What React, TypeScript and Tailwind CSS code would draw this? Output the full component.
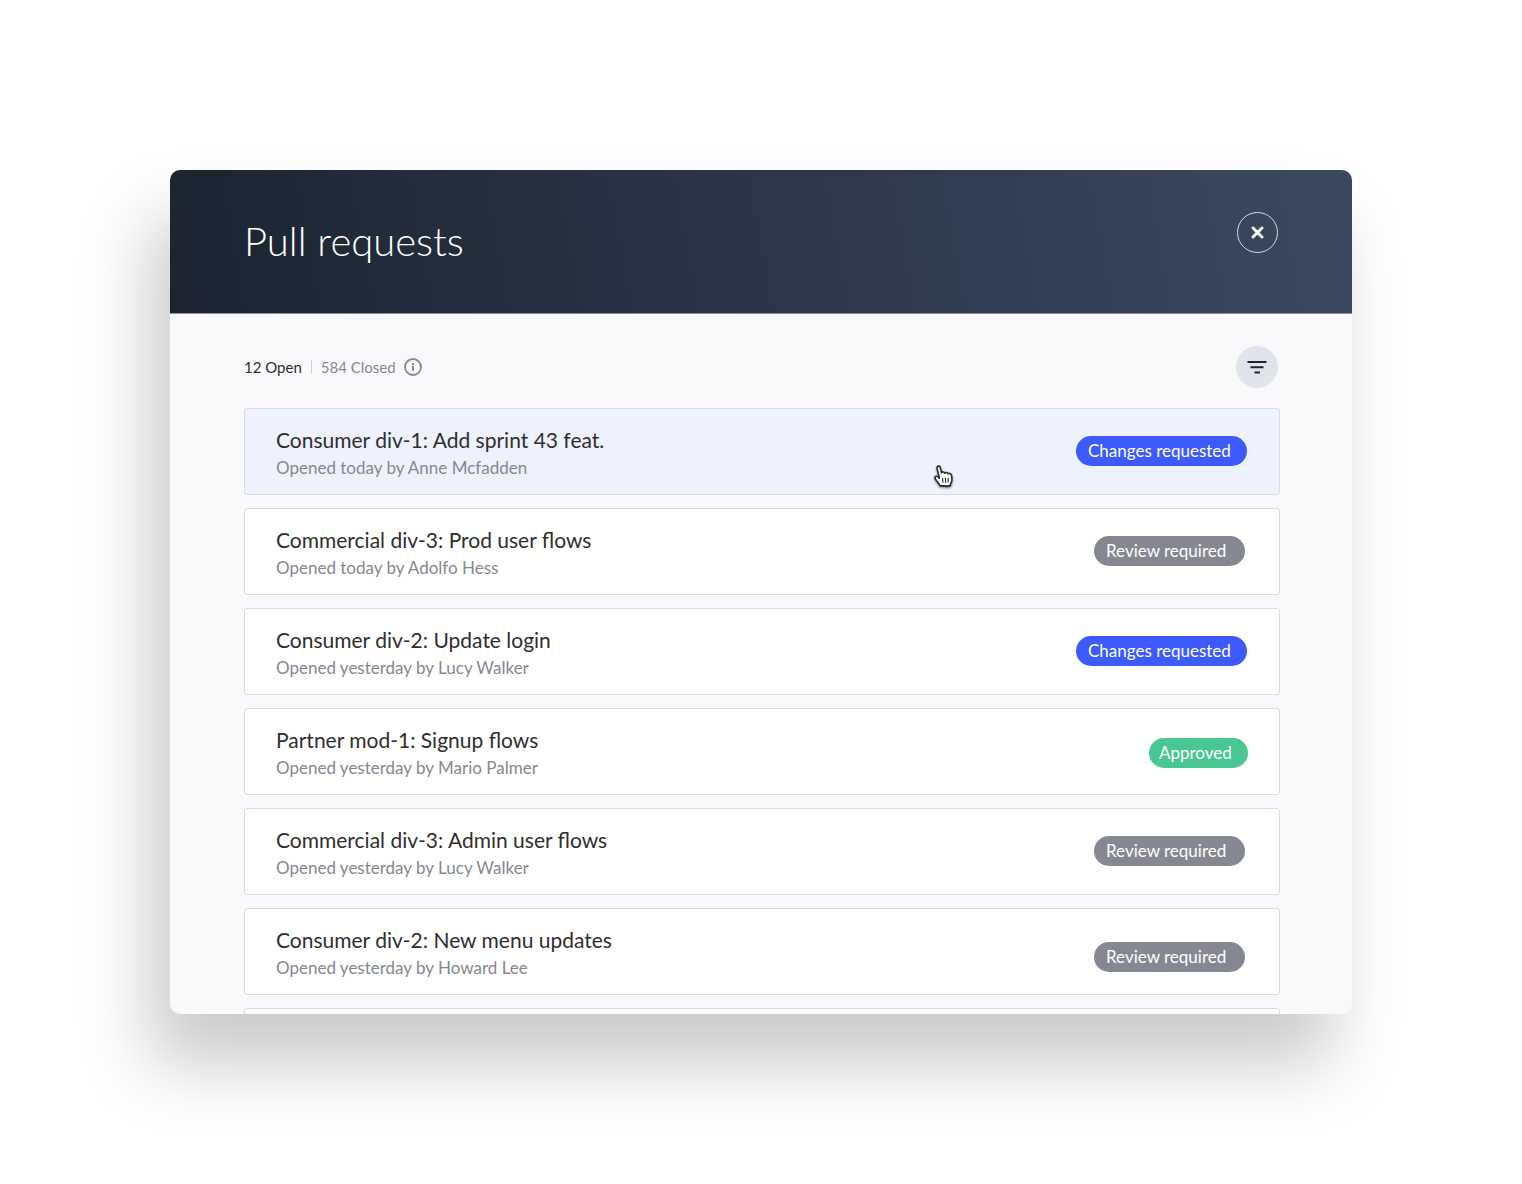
import React from "react";
import clsx from "clsx";

type Status = "changes" | "review" | "approved";

interface PullRequest {
  title: string;
  meta: string;
  status: Status;
  active?: boolean;
  badgeAtEnd?: boolean;
}

const pullRequests: PullRequest[] = [
  { title: "Consumer div-1: Add sprint 43 feat.", meta: "Opened today by Anne Mcfadden", status: "changes", active: true },
  { title: "Commercial div-3: Prod user flows", meta: "Opened today by Adolfo Hess", status: "review" },
  { title: "Consumer div-2: Update login", meta: "Opened yesterday by Lucy Walker", status: "changes" },
  { title: "Partner mod-1: Signup flows", meta: "Opened yesterday by Mario Palmer", status: "approved" },
  { title: "Commercial div-3: Admin user flows", meta: "Opened yesterday by Lucy Walker", status: "review" },
  { title: "Consumer div-2: New menu updates", meta: "Opened yesterday by Howard Lee", status: "review", badgeAtEnd: true },
];

const badges: Record<Status, { label: string; className: string }> = {
  changes: { label: "Changes requested", className: "mt-1 mr-8 w-[171px] px-3 bg-[#3d5afe]" },
  review: { label: "Review required", className: "mt-1 mr-[34px] w-[151px] px-3 bg-[#868891]" },
  approved: { label: "Approved", className: "mt-2 mr-[31px] w-[99px] px-2.5 bg-[#48c792]" },
};

const PointerCursor: React.FC = () => (
  <svg
    viewBox="1.5 0 17.5 21"
    className="pointer-events-none absolute top-14 left-2/3 h-6 w-5 drop-shadow-[0_1px_1px_rgba(0,0,0,0.5)]"
    aria-hidden="true"
  >
    <path
      d="M7 18.300c-.5-1.100-1.300-1.800-2.100-2.900-1-1.300-1.800-2.300-2.400-3.700-.5-1 .1-2 1.200-1.900.9.1 1.700.8 2.500 1.700L4.200 3C4 1.900 4.500 1.100 5.400 1c.9-.1 1.500.5 1.700 1.500l.9 4.300c.3-.7 1-.9 1.700-.7.6.1 1 .5 1.200 1 .5-.6 1.100-.7 1.800-.5.600.2 1 .6 1.100 1.200.5-.4 1-.5 1.600-.3.900.3 1.300 1 1.500 2 .3 1.600.4 2.900.1 4.500-.2 1.200-.9 1.900-1.200 3.100v1.200l-2-.1-1.200.6-1.100-.7z"
      fill="#fff"
      stroke="#2b2b2b"
      strokeWidth="1.400"
      strokeLinejoin="round"
    />
    <path d="M9 11.500l.3 4M11.500 11.300l.2 4.200M13.900 11.300v4" stroke="#2b2b2b" strokeWidth="1" fill="none" />
  </svg>
);

const PullRequestRow: React.FC<{ item: PullRequest }> = ({ item }) => {
  const badge = badges[item.status];

  return (
    <li
      className={clsx(
        "relative flex items-center justify-between rounded-[3px] border border-[#d8dae8] pt-[17px] pb-3 pl-[31px]",
        item.active ? "bg-[#eef2ff]" : "bg-white"
      )}
    >
      <div>
        <h2 className="text-[21px] leading-7 text-[#2e2e2e]">
          <a href="#">{item.title}</a>
        </h2>
        <p className="text-[17px] leading-7 text-[#868891]">{item.meta}</p>
      </div>
      <span
        className={clsx(
          "mb-2.5 h-[30px] rounded-full text-[17px] leading-[30px] whitespace-nowrap text-white",
          badge.className,
          item.badgeAtEnd && "self-end"
        )}
      >
        {badge.label}
      </span>
      {item.active && <PointerCursor />}
    </li>
  );
};

const App: React.FC = () => {
  return (
    <div className="flex h-screen bg-white p-[170px] font-['Lato','Open_Sans',sans-serif]">
      <main className="flex flex-1 flex-col overflow-hidden rounded-[10px] bg-[#f9f9fc] shadow-[-20px_50px_70px_rgba(0,0,0,0.21)]">
        <header className="flex shrink-0 items-start justify-between border-b border-[#8b8f9c] bg-linear-[80deg,#1b2430,#3b495f] px-[74px] pt-[42px] pb-[45px]">
          <h1 className="pt-[3px] text-[40px] leading-[53px] font-light text-white">Pull requests</h1>
          <button
            type="button"
            aria-label="Close"
            className="flex size-[41px] items-center justify-center rounded-full border border-[#d5d8e0]"
          >
            <svg viewBox="0 0 15 15" className="size-[15px]" stroke="#fff" strokeWidth="3" strokeLinecap="round">
              <path d="M3 3l9 9M12 3l-9 9" />
            </svg>
          </button>
        </header>

        <div className="flex shrink-0 items-center justify-between px-[74px] pt-8 pb-5">
          <div className="flex items-center text-[15px] leading-5">
            <a href="#" className="text-[#2e2e2e]">12 Open</a>
            <span className="mx-[9px] h-3.5 w-px bg-[#cfd0d6]" />
            <a href="#" className="text-[#868891]">584 Closed</a>
            <svg viewBox="0 0 18 18" className="ml-2 size-[18px]" fill="none" stroke="#868891">
              <circle cx="9" cy="9" r="8" strokeWidth="1.800" />
              <path d="M9 8v4.800M9 5.200v1.700" strokeWidth="2" />
            </svg>
          </div>
          <button
            type="button"
            aria-label="Filter"
            className="flex size-[42px] items-center justify-center rounded-full bg-[#e1e4eb]"
          >
            <svg viewBox="0 0 20 14" className="h-3.5 w-5" stroke="#1c2430" strokeWidth="2">
              <path d="M.500 2h19M3.500 7.300h13M7.500 12.500h5.500" />
            </svg>
          </button>
        </div>

        <ul className="flex shrink-0 flex-col gap-[13px] pr-[72px] pl-[74px]">
          {pullRequests.map((item) => (
            <PullRequestRow key={item.title} item={item} />
          ))}
          {/* next row, cut off by the bottom of the panel */}
          <li className="h-[87px] rounded-[3px] border border-[#d8dae8] bg-white" />
        </ul>
      </main>
    </div>
  );
};

export default App;
